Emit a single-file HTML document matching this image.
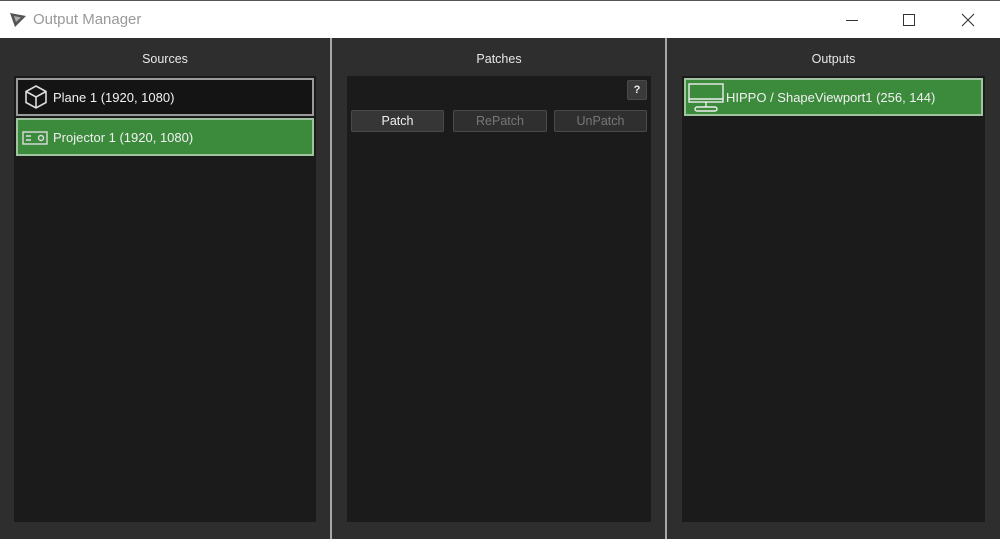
<!DOCTYPE html>
<html><head><meta charset="utf-8"><style>
*{margin:0;padding:0;box-sizing:border-box}
body{width:1000px;height:539px;overflow:hidden;background:#2e2e2e;font-family:"Liberation Sans",sans-serif;position:relative}
.title{position:absolute;left:0;top:0;width:1000px;height:38px;background:#fff;border-top:1px solid #555}
.title span{position:absolute;left:33px;top:10px;font-size:15px;color:#999}
.abs{position:absolute}
.hdr{position:absolute;top:52px;font-size:12.5px;color:#e8e8e8;text-align:center}
.box{position:absolute;top:76px;height:446px;background:#1b1b1b}
.item{position:absolute;height:38px;font-size:13px;color:#f2f2f2;line-height:35px;padding-left:35px}
.btn{position:absolute;top:110px;height:22px;border:1px solid #4a4a4a;border-radius:2px;background:#363636;font-size:12.5px;text-align:center;line-height:20px}
.split{position:absolute;top:38px;width:2px;height:501px;background:#a8a8a8}
</style></head><body>
<div class="title">
<svg class="abs" style="left:8px;top:9px" width="20" height="20" viewBox="0 0 20 20"><path d="M2 3 L18 6 L7 17 Z" fill="#555"/><path d="M6 6 L13 7.5 L8 12 Z" fill="#aaa"/></svg>
<span>Output Manager</span>
<div class="abs" style="left:846px;top:19px;width:12px;height:1px;background:#333"></div>
<div class="abs" style="left:903px;top:13px;width:12px;height:12px;border:1px solid #333"></div>
<svg class="abs" style="left:961px;top:12px" width="14" height="14" viewBox="0 0 14 14"><path d="M1 1L13 13M13 1L1 13" stroke="#333" stroke-width="1.1"/></svg>
</div>
<div class="split" style="left:330px"></div>
<div class="split" style="left:665px"></div>

<div class="hdr" style="left:0;width:330px">Sources</div>
<div class="box" style="left:14px;width:302px">
 <div class="item" style="left:2px;top:2px;width:298px;border:2px solid #9a9a9a;background:#141414">Plane 1 (1920, 1080)
  <svg class="abs" style="left:5px;top:4px" width="26" height="26" viewBox="0 0 26 26" fill="none" stroke="#ddd" stroke-width="1.6"><path d="M13 2 L23 7.5 L23 18.5 L13 24 L3 18.5 L3 7.5 Z M3 7.5 L13 13 L23 7.5 M13 13 L13 24"/></svg></div>
 <div class="item" style="left:2px;top:42px;width:298px;border:2px solid #9fc49f;background:#3c8a3c">Projector 1 (1920, 1080)
  <svg class="abs" style="left:4px;top:11px" width="26" height="14" viewBox="0 0 26 14" fill="none" stroke="#ddd" stroke-width="1.4"><rect x="1" y="1" width="24" height="12"/><path d="M4 5h5M4 9h5"/><circle cx="19" cy="7" r="2.5"/></svg></div>
</div>

<div class="hdr" style="left:333px;width:332px">Patches</div>
<div class="box" style="left:347px;width:304px">
 <div class="abs" style="left:280px;top:4px;width:20px;height:20px;background:#3a3a3a;border:1px solid #4a4a4a;border-radius:2px;color:#eee;font-size:11px;font-weight:bold;text-align:center;line-height:18px">?</div>
</div>
<div class="btn" style="left:351px;width:93px;color:#f0f0f0">Patch</div>
<div class="btn" style="left:453px;width:94px;color:#777;background:#2f2f2f">RePatch</div>
<div class="btn" style="left:554px;width:93px;color:#777;background:#2f2f2f">UnPatch</div>

<div class="hdr" style="left:667px;width:333px">Outputs</div>
<div class="box" style="left:682px;width:303px">
 <div class="item" style="left:2px;top:2px;width:299px;border:2px solid #9fc49f;background:#3c8a3c;padding-left:40px">HIPPO / ShapeViewport1 (256, 144)
  <svg class="abs" style="left:1px;top:2px" width="38" height="32" viewBox="0 0 38 32" fill="none" stroke="#eee" stroke-width="1.4"><rect x="2" y="2" width="34" height="18"/><path d="M2 17h34M19 20v5"/><rect x="8" y="25" width="22" height="4" rx="2"/></svg></div>
</div>
</body></html>
